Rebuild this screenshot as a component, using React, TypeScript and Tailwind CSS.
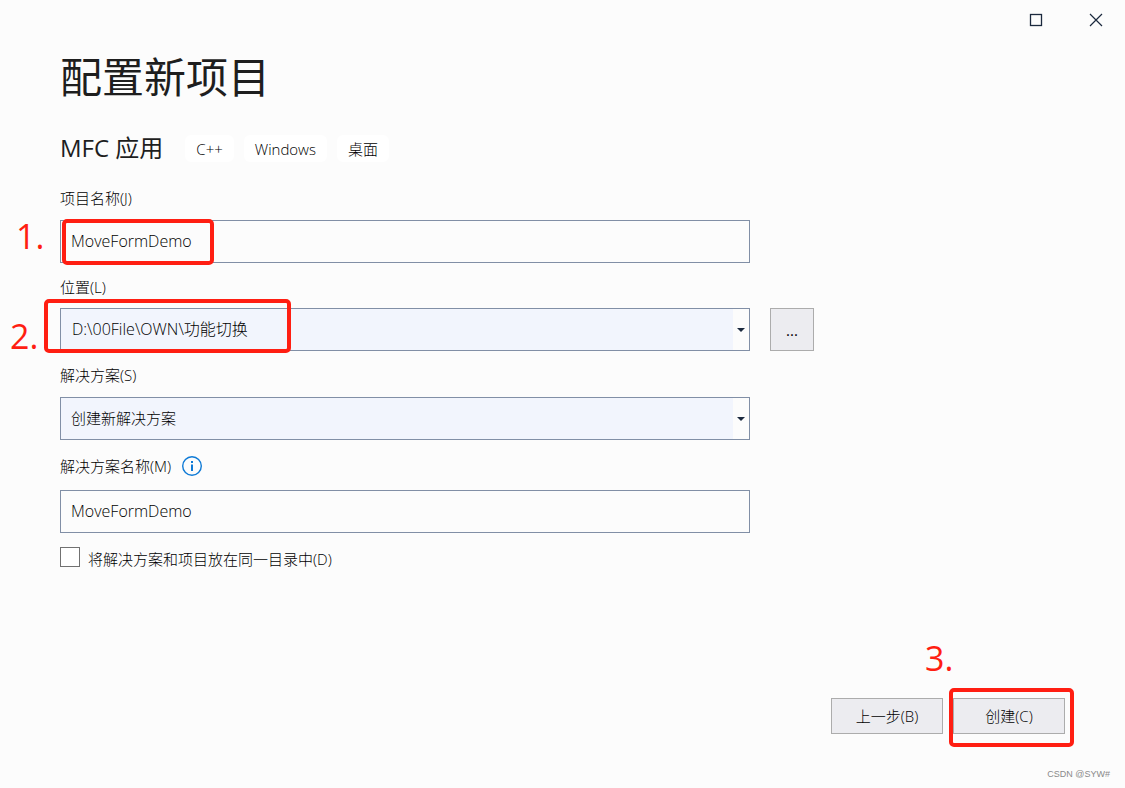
import { useState } from "react";
import type { ReactNode } from "react";

const fieldBox = "h-[43px] w-full border border-[#818fa6] text-black";

function Tag({ children }: { children: ReactNode }) {
  return (
    <li className="flex h-[27px] items-center rounded-md bg-white px-[11px] pt-0.5">{children}</li>
  );
}

function Caret() {
  return (
    <svg className="h-1 w-2" viewBox="0 0 8 4" aria-hidden="true">
      <path d="M0 0H8L4 4Z" fill="#1b293e" />
    </svg>
  );
}

function Step({ className, children }: { className: string; children: ReactNode }) {
  return (
    <span className={"pointer-events-none absolute text-[34px] leading-10 font-normal text-[#ff1e12] " + className}>
      {children}
    </span>
  );
}

function Frame({ className }: { className: string }) {
  return (
    <span
      aria-hidden="true"
      className={"pointer-events-none absolute rounded-[5px] border-4 border-[#ff1e12] " + className}
    />
  );
}

export default function App() {
  const [name, setName] = useState("MoveFormDemo");
  const [path, setPath] = useState("D:\\00File\\OWN\\功能切换");
  const [solution, setSolution] = useState("MoveFormDemo");
  const [same, setSame] = useState(false);

  return (
    <div className="flex min-h-screen flex-col bg-[#fcfcfc] font-['Open_Sans','Noto_Sans_CJK_SC',sans-serif] text-[15px] leading-5 font-light text-black">
      <header className="flex h-10 justify-end">
        <button type="button" aria-label="最大化" className="flex w-15 items-center justify-center">
          <svg className="size-4" viewBox="0 0 16 16" aria-hidden="true">
            <rect x="3.5" y="2.5" width="11" height="11" fill="none" stroke="#1b293e" strokeWidth="1.3" />
          </svg>
        </button>
        <button type="button" aria-label="关闭" className="flex w-15 items-center justify-center">
          <svg className="size-4" viewBox="0 0 16 16" aria-hidden="true">
            <path d="M3 2L15 14M15 2L3 14" fill="none" stroke="#1b293e" strokeWidth="1.2" />
          </svg>
        </button>
      </header>

      <main className="flex flex-1 flex-col px-[60px]">
        <h1 className="mt-[7px] text-[42px] leading-[60px] font-normal text-[#1e1e1e]">配置新项目</h1>

        <div className="mt-[26px] flex items-center gap-[22px]">
          <h2 className="text-2xl leading-[30px] font-normal text-[#1e1e1e]">MFC 应用</h2>
          <ul className="flex gap-2.5">
            <Tag>C++</Tag>
            <Tag>Windows</Tag>
            <Tag>桌面</Tag>
          </ul>
        </div>

        <form className="flex flex-1 flex-col" onSubmit={(e) => e.preventDefault()}>
          <div className="mt-[25px] flex max-w-[690px] flex-col">
            <label htmlFor="name" className="mb-3">项目名称(J)</label>
            <div className="relative">
              <input
                id="name"
                value={name}
                onChange={(e) => setName(e.target.value)}
                className={fieldBox + " block bg-[#fcfcfc] px-2.5 pb-0.5 text-base"}
              />
              <Frame className="-top-px left-0.5 h-[46px] w-[152px]" />
              <Step className="-left-11 -top-1">1.</Step>
            </div>
          </div>

          <div className="mt-3.5 flex flex-col">
            <label htmlFor="path" className="mb-[11px]">位置(L)</label>
            <div className="flex gap-5">
              <div className="relative w-full max-w-[690px]">
                <div className={fieldBox + " flex"}>
                  <input
                    id="path"
                    value={path}
                    onChange={(e) => setPath(e.target.value)}
                    className="min-w-0 flex-1 bg-[#f2f5fd] px-[11px] pb-0.5 text-base"
                  />
                  <button type="button" aria-label="位置列表" className="flex w-4 items-center justify-center">
                    <Caret />
                  </button>
                </div>
                <Frame className="-left-4 -top-[9px] h-[54px] w-[247px]" />
                <Step className="-left-[50px] top-2">2.</Step>
              </div>
              <button type="button" aria-label="浏览" className="h-[43px] w-11 shrink-0 border border-[#acacac] bg-[#ececf0] font-normal">
                ...
              </button>
            </div>
          </div>

          <div className="mt-3.5 flex max-w-[690px] flex-col">
            <label htmlFor="mode" className="mb-3">解决方案(S)</label>
            <div className="relative">
              <select
                id="mode"
                className={fieldBox + " block appearance-none bg-[linear-gradient(to_left,#fcfcfc_16px,#f2f5fd_16px)] px-2.5 pb-0.5"}
              >
                <option>创建新解决方案</option>
              </select>
              <span className="pointer-events-none absolute inset-y-0 right-px flex w-4 items-center justify-center">
                <Caret />
              </span>
            </div>
          </div>

          <div className="mt-4 flex max-w-[690px] flex-col">
            <div className="mb-3.5 flex items-center gap-[11px]">
              <label htmlFor="solution">解决方案名称(M)</label>
              <svg className="size-5" viewBox="0 0 20 20" aria-hidden="true">
                <circle cx="10" cy="10" r="9.3" fill="none" stroke="#0e7ad6" strokeWidth="1.4" />
                <path d="M9 5H11V7H9ZM9 8.5H11V15H9Z" fill="#0e7ad6" />
              </svg>
            </div>
            <input
              id="solution"
              value={solution}
              onChange={(e) => setSolution(e.target.value)}
              className={fieldBox + " block bg-[#fcfcfc] px-2.5 pb-0.5 text-base"}
            />
          </div>

          <label className="mt-3.5 flex items-start gap-2 self-start">
            <input
              type="checkbox"
              checked={same}
              onChange={(e) => setSame(e.target.checked)}
              className="size-5 appearance-none border border-[#717171] bg-white checked:bg-[#0e7ad6]"
            />
            <span className="pt-0.5">将解决方案和项目放在同一目录中(D)</span>
          </label>

          <div className="mt-auto flex justify-end gap-2.5">
            <button type="button" className="h-9 w-28 border border-[#acacac] bg-[#ececf0]">上一步(B)</button>
            <div className="relative">
              <button type="submit" className="block h-9 w-28 border border-[#acacac] bg-[#ececf0]">创建(C)</button>
              <Frame className="-left-1 -top-2.5 h-[59px] w-[125px]" />
              <Step className="-left-7 -top-15">3.</Step>
            </div>
          </div>
        </form>
      </main>

      <footer className="mt-7 flex h-[26px] justify-end px-[15px] pt-1 font-['Liberation_Sans',sans-serif] text-[9px] leading-4 font-normal text-[#8a8a8a]">
        CSDN @SYW#
      </footer>
    </div>
  );
}
